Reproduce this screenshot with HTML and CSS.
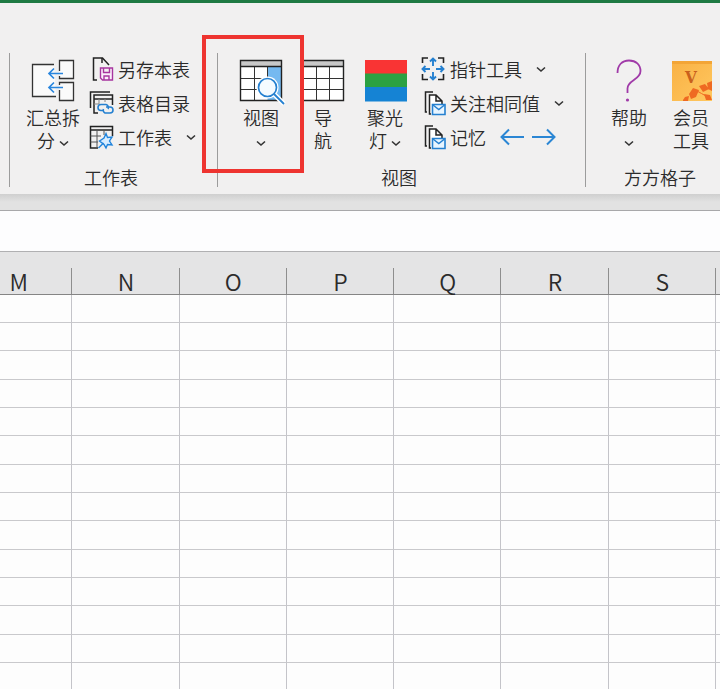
FILE: index.html
```html
<!DOCTYPE html>
<html lang="zh-CN">
<head>
    <meta charset="UTF-8">
    <meta name="viewport" content="width=device-width, initial-scale=1.0">
    <title>方方格子</title>
    <link rel="stylesheet" href="styles.css">
</head>
<body>
    <svg class="defs" aria-hidden="true">
        <symbol id="chevron" viewBox="0 0 10 10">
            <path d="M1 3.5L5 7L9 3.5" fill="none" stroke="#333" stroke-width="1.6"/>
        </symbol>
        <symbol id="note" viewBox="0 0 26 26">
            <path d="M7 22H5.5V2H13" fill="none" stroke="#222" stroke-width="1.5"/>
            <path d="M11 24H9.5V5H16L22 11V14M16 5V11H22" fill="#fff" stroke="#222" stroke-width="1.5"/>
            <path d="M12.5 14.5H25V24.5H12.5Z" fill="#e8f5ff" stroke="#2580d0" stroke-width="1.6"/>
            <path d="M13 15L18.8 19.5L24.5 15" fill="none" stroke="#2580d0" stroke-width="1.5"/>
        </symbol>
    </svg>

    <header class="ribbon">
        <!-- 工作表 -->
        <section class="group">
            <div class="controls">
                <button class="big-btn" type="button">
                    <svg class="big-icon" viewBox="0 0 44 44">
                        <path d="M23 6.5H1.5V38.5H25" fill="#fafafa" stroke="#333" stroke-width="1.3"/>
                        <path d="M28.5 13V2.5H42.5V20.5H28.5V18M28.5 27V24.5H42.5V42.5H28.5V32" fill="#fafafa" stroke="#333" stroke-width="1.3"/>
                        <path d="M32 15.5H18M23 10.5L18 15.5L23 20.5M32 29.5H18M23 24.5L18 29.5L23 34.5" fill="none" stroke="#2a86de" stroke-width="1.7"/>
                    </svg>
                    <span>汇总拆<br>分 <svg class="chevron"><use href="#chevron"/></svg></span>
                </button>
                <div class="list">
                    <button class="small-btn" type="button">
                        <svg class="icon" viewBox="0 0 26 26">
                            <path d="M9 24H5.5V2H14.5L21 9" fill="none" stroke="#222" stroke-width="1.5"/>
                            <path d="M14 2V7" stroke="#222" stroke-width="1.5"/>
                            <path d="M12.5 12H24.5V24H14.5L12.5 22ZM15.5 12V16.5H21.5V12M16 24V20H21V24" fill="#fbeefb" stroke="#a7359f" stroke-width="1.4"/>
                        </svg>
                        <span>另存本表</span>
                    </button>
                    <button class="small-btn" type="button">
                        <svg class="icon" viewBox="0 0 26 26">
                            <path d="M2.5 18V2H22" fill="none" stroke="#222" stroke-width="1.5"/>
                            <path d="M10 23H6V5H24.5V15M6 9H24.5" fill="none" stroke="#222" stroke-width="1.5"/>
                            <path d="M11 9V14M17 9V12M6 14H11" stroke="#888"/>
                            <path d="M16 20.5H13A3 3 0 0 1 13 14.5H18A3 3 0 0 1 20 19M18 17H22A3 3 0 0 1 22 23H17A3 3 0 0 1 15.5 19" fill="none" stroke="#2580d0" stroke-width="1.6"/>
                        </svg>
                        <span>表格目录</span>
                    </button>
                    <button class="small-btn" type="button">
                        <svg class="icon" viewBox="0 0 26 26">
                            <path d="M10 24H2.5V2.5H24.5V12M2.5 6H24.5" fill="none" stroke="#222" stroke-width="1.5"/>
                            <path d="M9 6V24M16 6V11M2.5 12H13M2.5 18H10" fill="none" stroke="#555"/>
                            <path d="M18 9.5L19.5 13.5L24 13L21.5 17L24 21L19.5 20.5L18 24L16 20.5L11.5 17L16 14Z" fill="#d8edff" stroke="#2084dc" stroke-width="1.4"/>
                            <path d="M15.5 19L10.5 24" stroke="#2084dc" stroke-width="1.5"/>
                        </svg>
                        <span>工作表</span>
                        <svg class="chevron"><use href="#chevron"/></svg>
                    </button>
                </div>
            </div>
            <h2 class="group-name">工作表</h2>
        </section>

        <!-- 视图 -->
        <section class="group">
            <div class="controls">
                <button class="big-btn active" type="button">
                    <svg class="big-icon" viewBox="0 0 44 44">
                        <path d="M1.5 2.5H42.5V42.5H1.5Z" fill="#fff"/>
                        <path d="M1.5 2.5H42.5V8.5H1.5Z" fill="#c8c8c8"/>
                        <path d="M28.5 8.5H42.5V42.5H28.5Z" fill="#75b9f0"/>
                        <path d="M15.5 8.5V42M1.5 20.5H28.5M1.5 31.5H28.5M28.5 8.5V20" stroke="#333"/>
                        <path d="M1.5 2.5H42.5V42.5H1.5ZM1.5 8.5H42.5" fill="none" stroke="#222" stroke-width="1.4"/>
                        <path d="M35 36L45 46" stroke="#fff" stroke-width="5"/>
                        <circle cx="28.5" cy="29.5" r="11" fill="#fff"/>
                        <circle cx="28.5" cy="29.5" r="9" fill="#f5fbff" stroke="#2580d0" stroke-width="1.7"/>
                        <path d="M35 36L45 46" stroke="#2580d0" stroke-width="1.8"/>
                    </svg>
                    <span>视图<br><svg class="chevron"><use href="#chevron"/></svg></span>
                    <span class="highlight"></span>
                </button>
                <button class="big-btn" type="button">
                    <svg class="big-icon" viewBox="0 0 44 44">
                        <path d="M1.5 2.5H42.5V42.5H1.5Z" fill="#fff"/>
                        <path d="M1.5 2.5H42.5V8.5H1.5Z" fill="#c8c8c8"/>
                        <path d="M15.5 8.5V42M28.5 8.5V42M1.5 20.5H42M1.5 31.5H42" stroke="#333"/>
                        <path d="M1.5 2.5H42.5V42.5H1.5ZM1.5 8.5H42.5" fill="none" stroke="#222" stroke-width="1.4"/>
                    </svg>
                    <span>导<br>航</span>
                </button>
                <button class="big-btn" type="button">
                    <svg class="big-icon" viewBox="0 0 44 44">
                        <path d="M2 2H44V16H2Z" fill="#f93434"/>
                        <path d="M2 15.5H44V29H2Z" fill="#2ba143"/>
                        <path d="M2 29H44V43.5H2Z" fill="#1583d4"/>
                    </svg>
                    <span>聚光<br>灯 <svg class="chevron"><use href="#chevron"/></svg></span>
                </button>
                <div class="list">
                    <button class="small-btn" type="button">
                        <svg class="icon" viewBox="0 0 26 26">
                            <path d="M2.5 7V2H8M18 2H23.5V7M23.5 18V23.5H18M8 23.5H2.5V18" fill="none" stroke="#222" stroke-width="1.6"/>
                            <path d="M13 10V2M10 5.5L13 2.5L16 5.5M13 16V24M10 20.5L13 23.5L16 20.5M10 13H2M5.5 10L2.5 13L5.5 16M16 13H24M20.5 10L23.5 13L20.5 16" fill="none" stroke="#2580d0" stroke-width="1.9"/>
                        </svg>
                        <span>指针工具</span>
                        <svg class="chevron"><use href="#chevron"/></svg>
                    </button>
                    <button class="small-btn" type="button">
                        <svg class="icon"><use href="#note"/></svg>
                        <span>关注相同值</span>
                        <svg class="chevron"><use href="#chevron"/></svg>
                    </button>
                    <div class="memory">
                        <button class="small-btn" type="button">
                            <svg class="icon"><use href="#note"/></svg>
                            <span>记忆</span>
                        </button>
                        <button class="arrow-btn" type="button" aria-label="后退">
                            <svg class="arrow" viewBox="0 0 24 18"><path d="M24 9H1.5M9 1.5L1.5 9L9 16.5"/></svg>
                        </button>
                        <button class="arrow-btn" type="button" aria-label="前进">
                            <svg class="arrow" viewBox="0 0 24 18"><path d="M0 9H22.5M15 1.5L22.5 9L15 16.5"/></svg>
                        </button>
                    </div>
                </div>
            </div>
            <h2 class="group-name">视图</h2>
        </section>

        <!-- 方方格子 -->
        <section class="group last">
            <div class="controls">
                <button class="big-btn" type="button">
                    <svg class="big-icon" viewBox="0 0 44 44">
                        <path d="M10.5 15C10.5 7 15 2.5 22 2.5C29 2.5 33.5 6.5 33.5 13C33.5 22 20.5 22 20.5 30.5V35" fill="none" stroke="#a03aa8" stroke-width="1.8"/>
                        <circle cx="20.5" cy="42" r="1.6" fill="#a03aa8"/>
                    </svg>
                    <span>帮助<br><svg class="chevron"><use href="#chevron"/></svg></span>
                </button>
                <button class="big-btn" type="button">
                    <svg class="big-icon" viewBox="0 0 44 44">
                        <defs>
                            <linearGradient id="gold" x1="0" y1="0" x2="1" y2="1">
                                <stop offset="0" stop-color="#f9b144"/>
                                <stop offset="1" stop-color="#ffc75f"/>
                            </linearGradient>
                        </defs>
                        <path d="M3 3H43V43H3Z" fill="url(#gold)"/>
                        <path d="M3 3H43V6H3Z" fill="#f3a536"/>
                        <text class="vip" x="22" y="25" text-anchor="middle">V</text>
                        <path d="M14 42L16 39L20 38L19 43H14ZM20 36L24 30L30 32L27 39L22 41ZM30 28L36 26L40 31L34 34ZM38 25L43 23V33L39 31ZM35 36L41 37L43 42L37 42Z" fill="#ef6a22"/>
                        <path d="M28 33C31 35 34 36 37 38" fill="none" stroke="#ef6a22"/>
                    </svg>
                    <span>会员<br>工具</span>
                </button>
            </div>
            <h2 class="group-name">方方格子</h2>
        </section>
    </header>

    <div class="ribbon-shadow"></div>
    <div class="formula-bar"></div>

    <main class="sheet">
        <table class="grid">
            <colgroup>
                <col span="7">
                <col class="edge">
            </colgroup>
            <thead>
                <tr><th>M</th><th>N</th><th>O</th><th>P</th><th>Q</th><th>R</th><th>S</th><th></th></tr>
            </thead>
            <tbody>
                <tr><td></td><td></td><td></td><td></td><td></td><td></td><td></td><td></td></tr>
                <tr><td></td><td></td><td></td><td></td><td></td><td></td><td></td><td></td></tr>
                <tr><td></td><td></td><td></td><td></td><td></td><td></td><td></td><td></td></tr>
                <tr><td></td><td></td><td></td><td></td><td></td><td></td><td></td><td></td></tr>
                <tr><td></td><td></td><td></td><td></td><td></td><td></td><td></td><td></td></tr>
                <tr><td></td><td></td><td></td><td></td><td></td><td></td><td></td><td></td></tr>
                <tr><td></td><td></td><td></td><td></td><td></td><td></td><td></td><td></td></tr>
                <tr><td></td><td></td><td></td><td></td><td></td><td></td><td></td><td></td></tr>
                <tr><td></td><td></td><td></td><td></td><td></td><td></td><td></td><td></td></tr>
                <tr><td></td><td></td><td></td><td></td><td></td><td></td><td></td><td></td></tr>
                <tr><td></td><td></td><td></td><td></td><td></td><td></td><td></td><td></td></tr>
                <tr><td></td><td></td><td></td><td></td><td></td><td></td><td></td><td></td></tr>
                <tr><td></td><td></td><td></td><td></td><td></td><td></td><td></td><td></td></tr>
                <tr><td></td><td></td><td></td><td></td><td></td><td></td><td></td><td></td></tr>
            </tbody>
        </table>
    </main>
</body>
</html>
```

FILE: styles.css
```css
/* 全局样式 */
* {
    box-sizing: border-box;
}
body {
    margin: 0;
    height: 100vh;
    display: flex;
    flex-direction: column;
    overflow: hidden;
    font-family: "Noto Sans CJK SC", "Noto Sans", sans-serif;
    font-size: 18px;
    font-weight: 350;
    color: #2b2b2b;
    background: #fdfdfd;
}
.defs {
    display: none;
}
button {
    margin: 0;
    padding: 0;
    border: 0;
    background: none;
    font: inherit;
    color: inherit;
    cursor: pointer;
}

/* 功能区 */
.ribbon {
    display: flex;
    flex: none;
    padding: 50px 0 7px 9px;
    border-top: 3px solid #1f7a43;
    background: #f1f0f0;
}
.group {
    flex: none;
    padding: 0 21px 0 16px;
    border-left: 1px solid #9c9c9c;
}
.group.last {
    padding-right: 14px;
}
.controls {
    display: flex;
    gap: 8px;
    height: 100px;
}
.group-name {
    margin: 14px 0 0;
    font-size: 18px;
    font-weight: inherit;
    line-height: 20px;
    text-align: center;
}

/* 大按钮 */
.big-btn {
    position: relative;
    display: flex;
    flex-direction: column;
    align-items: center;
    gap: 4px;
    width: 54px;
    padding-top: 5px;
    line-height: 23px;
    white-space: nowrap;
}
.big-icon {
    width: 44px;
    height: 44px;
    flex: none;
    overflow: visible;
}
.chevron {
    width: 10px;
    height: 10px;
    flex: none;
}
.vip {
    font-family: "DejaVu Serif Condensed", "DejaVu Serif", serif;
    font-size: 17px;
    font-weight: bold;
    fill: #c9601c;
}

/* 红色标注框 */
.highlight {
    position: absolute;
    z-index: 1;
    top: -18px;
    left: -32px;
    right: -16px;
    height: 138px;
    border: 4px solid #ee3430;
}
.active {
    z-index: 1;
}

/* 小按钮列表 */
.list {
    display: flex;
    flex-direction: column;
    align-items: flex-start;
    gap: 2px;
}
.small-btn {
    display: flex;
    align-items: center;
    gap: 4px;
    height: 32px;
    white-space: nowrap;
}
.small-btn .chevron {
    margin-left: 10px;
}
.icon {
    width: 26px;
    height: 26px;
}
.memory {
    display: flex;
    align-items: center;
}
.arrow-btn {
    display: flex;
    margin-left: 14px;
}
.arrow-btn + .arrow-btn {
    margin-left: 8px;
}
.arrow {
    width: 24px;
    height: 18px;
    fill: none;
    stroke: #2b86d4;
    stroke-width: 2;
}

/* 编辑栏 */
.ribbon-shadow {
    flex: none;
    height: 17px;
    background: linear-gradient(#cfcfcf, #e2e2e2 8px);
    border-bottom: 1px solid #a8a8aa;
}
.formula-bar {
    flex: none;
    height: 41px;
    background: #fdfdfe;
    border-bottom: 1px solid #b0b0b2;
}

/* 表格区 */
.sheet {
    flex: 1;
    min-height: 0;
    overflow: hidden;
}
.grid {
    width: calc(100% + 35px);
    margin-left: -35px;
    table-layout: fixed;
    border-collapse: separate;
    border-spacing: 0;
}
.edge {
    width: 4px;
}
.grid th {
    height: 43px;
    padding: 17px 0 0;
    border-bottom: 1px solid #858585;
    background: linear-gradient(#8e8e8e, #8e8e8e) right bottom / 1px 26px no-repeat #e4e4e5;
    font-size: 23px;
    font-weight: 350;
    line-height: 25px;
    color: #2b2b2b;
}
.grid td {
    height: 28px;
    padding: 0;
    border-right: 1px solid #c4c4c9;
    border-bottom: 1px solid #c9c9cc;
}
.grid tr:nth-child(3n) td {
    height: 29px;
}
.grid th:last-child {
    background: #e4e4e5;
}
.grid td:last-child {
    border-right: 0;
}
```
